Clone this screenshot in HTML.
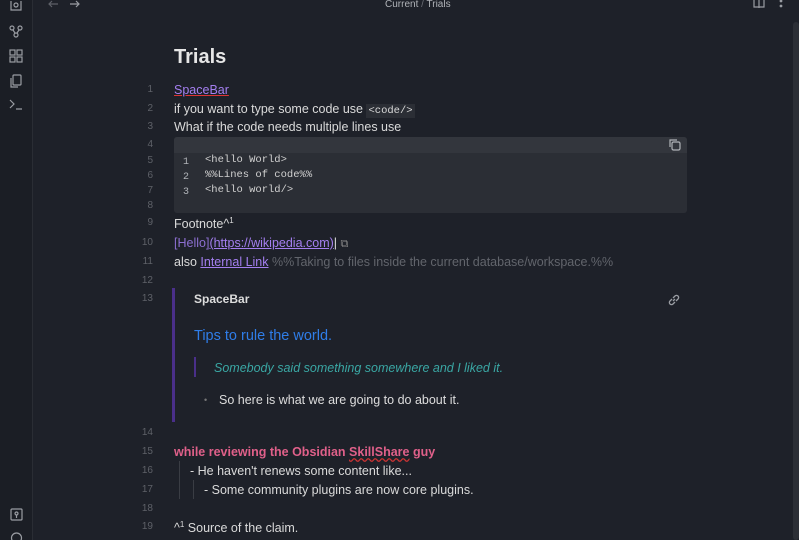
<!DOCTYPE html>
<html><head><meta charset="utf-8"><style>
*{margin:0;padding:0;box-sizing:border-box}
body{width:799px;height:540px;overflow:hidden;background:#1e2129;font-family:"Liberation Sans",sans-serif;color:#dadada;position:relative;font-size:12.5px}
.side{position:absolute;left:0;top:0;width:33px;height:540px;background:#1b1e25;border-right:1px solid #2a2d34}
.a{position:absolute}
.ln{position:absolute;width:153px;left:0;text-align:right;color:#5e6168;font-size:10px}
.t{position:absolute;left:174px;white-space:nowrap;font-size:12.5px}
.mono{font-family:"Liberation Mono",monospace}
.lk{color:#a47ff0;text-decoration:underline}
svg{position:absolute}
sup{font-size:8px;vertical-align:5px}
</style></head><body>
<div class="side"></div>
<svg style="left:8px;top:0" width="16" height="120" fill="none" stroke="#9a9da3" stroke-width="1.2">
<path d="M3 1v9h10V1"/><circle cx="8" cy="5" r="2"/>
<circle cx="4" cy="28" r="2"/><circle cx="12" cy="28" r="2"/><circle cx="8" cy="35" r="2"/><path d="M5 30l2 3M11 30l-2 3"/>
<rect x="2" y="50" width="5" height="5"/><rect x="9" y="50" width="5" height="5"/><rect x="2" y="57" width="5" height="5"/><rect x="9" y="57" width="5" height="5"/>
<rect x="5" y="75" width="8" height="10" rx="1"/><path d="M3 78v9h7"/>
<path d="M2 100l4 4-4 4M8 109h6"/>
</svg>
<svg style="left:10px;top:508px" width="14" height="32" fill="none" stroke="#9a9da3" stroke-width="1.2"><rect x="1" y="1" width="11" height="11" rx="1"/><circle cx="6.5" cy="5.5" r="1.5"/><path d="M6.5 7v3"/><circle cx="6.5" cy="30" r="5"/></svg>
<svg style="left:48px;top:0" width="40" height="10" fill="none" stroke="#5e6168" stroke-width="1.2"><path d="M10 4H1M4 1L1 4l3 3"/><path d="M22 4h9M28 1l3 3-3 3" stroke="#9a9da3"/></svg>
<div class="a" style="left:385px;top:-1px;font-size:10px;color:#b0b3b8">Current <span style="color:#6a6d74">/</span> Trials</div>
<svg style="left:752px;top:0" width="40" height="10" fill="none" stroke="#9a9da3" stroke-width="1.2"><path d="M2 0v7h10V0M7 0v8"/><circle cx="29" cy="1" r=".8" fill="#9a9da3"/><circle cx="29" cy="6" r=".8" fill="#9a9da3"/></svg>
<div class="a" style="left:793px;top:22px;width:6px;height:518px;background:#2c2f36;border-radius:3px"></div>
<div class="a" style="left:174px;top:46px;font-size:20px;font-weight:bold;color:#e6e6e6">Trials</div>
<div class="ln" style="top:84px">1</div><div class="t lk" style="top:83px;text-decoration-color:#d33">SpaceBar</div>
<div class="ln" style="top:103px">2</div><div class="t" style="top:102px">if you want to type some code use <span class="mono" style="font-size:10.5px;background:#2b2e35;padding:1px 2px">&lt;code/&gt;</span></div>
<div class="ln" style="top:121px">3</div><div class="t" style="top:120px">What if the code needs multiple lines use</div>
<div class="ln" style="top:139px">4</div>
<div class="a" style="left:174px;top:137px;width:513px;height:76px;background:#2b2e35;border-radius:3px"></div>
<div class="a" style="left:174px;top:137px;width:513px;height:16px;background:#33363d;border-radius:3px 3px 0 0"></div>
<svg style="left:667px;top:137px" width="16" height="16" fill="none" stroke="#b0b3b8" stroke-width="1.2"><rect x="5" y="5" width="8" height="8" rx="1.5"/><path d="M3 10V3h7"/></svg>
<div class="ln" style="top:155px">5</div><div class="ln" style="top:170px">6</div><div class="ln" style="top:185px">7</div><div class="ln" style="top:200px">8</div>
<div class="a mono" style="left:183px;top:155px;font-size:10px;line-height:15px;color:#b0b3b8">1<br>2<br>3</div>
<div class="a mono" style="left:205px;top:153px;font-size:10.5px;line-height:15px;color:#d0d0d0">&lt;hello World&gt;<br>%%Lines of code%%<br>&lt;hello world/&gt;</div>
<div class="ln" style="top:217px">9</div><div class="t" style="top:216px">Footnote^<sup>1</sup></div>
<div class="ln" style="top:237px">10</div><div class="t" style="top:236px"><span style="color:#8c6fd0">[Hello]</span><span class="lk">(https://wikipedia.com)</span><span style="color:#ddd">|</span> <span style="color:#888;font-size:11px">⧉</span></div>
<div class="ln" style="top:256px">11</div><div class="t" style="top:255px">also <span class="lk">Internal Link</span> <span style="color:#62656c">%%Taking to files inside the current database/workspace.%%</span></div>
<div class="ln" style="top:275px">12</div>
<div class="ln" style="top:293px">13</div>
<div class="a" style="left:172px;top:288px;width:3px;height:134px;background:#4a2f8a"></div>
<div class="a" style="left:194px;top:292px;font-size:12px;font-weight:bold;color:#ddd">SpaceBar</div>
<svg style="left:667px;top:293px" width="14" height="14" fill="none" stroke="#9a9da3" stroke-width="1.3"><path d="M6 8l2-2M5 6L3 8a2 2 0 003 3l2-2M9 8l2-2a2 2 0 00-3-3L6 5"/></svg>
<div class="a" style="left:194px;top:328px;font-size:14.5px;color:#2f7de8">Tips to rule the world.</div>
<div class="a" style="left:194px;top:357px;width:2px;height:20px;background:#4a2f8a"></div>
<div class="a" style="left:214px;top:361px;font-style:italic;color:#3aa7a4">Somebody said something somewhere and I liked it.</div>
<div class="a" style="left:204px;top:395px;color:#777;font-size:9px">•</div>
<div class="a" style="left:219px;top:393px;color:#ddd">So here is what we are going to do about it.</div>
<div class="ln" style="top:427px">14</div>
<div class="ln" style="top:446px">15</div><div class="t" style="top:445px;color:#e0608a;font-weight:bold">while reviewing the Obsidian <span style="text-decoration:underline wavy #c33">SkillShare</span> guy</div>
<div class="a" style="left:179px;top:461px;width:1px;height:38px;background:#3a3d44"></div>
<div class="a" style="left:193px;top:480px;width:1px;height:19px;background:#3a3d44"></div>
<div class="ln" style="top:465px">16</div><div class="t" style="left:190px;top:464px">- He haven't renews some content like...</div>
<div class="ln" style="top:484px">17</div><div class="t" style="left:204px;top:483px">- Some community plugins are now core plugins.</div>
<div class="ln" style="top:503px">18</div>
<div class="ln" style="top:521px">19</div><div class="t" style="top:520px">^<sup>1</sup> Source of the claim.</div>
</body></html>
